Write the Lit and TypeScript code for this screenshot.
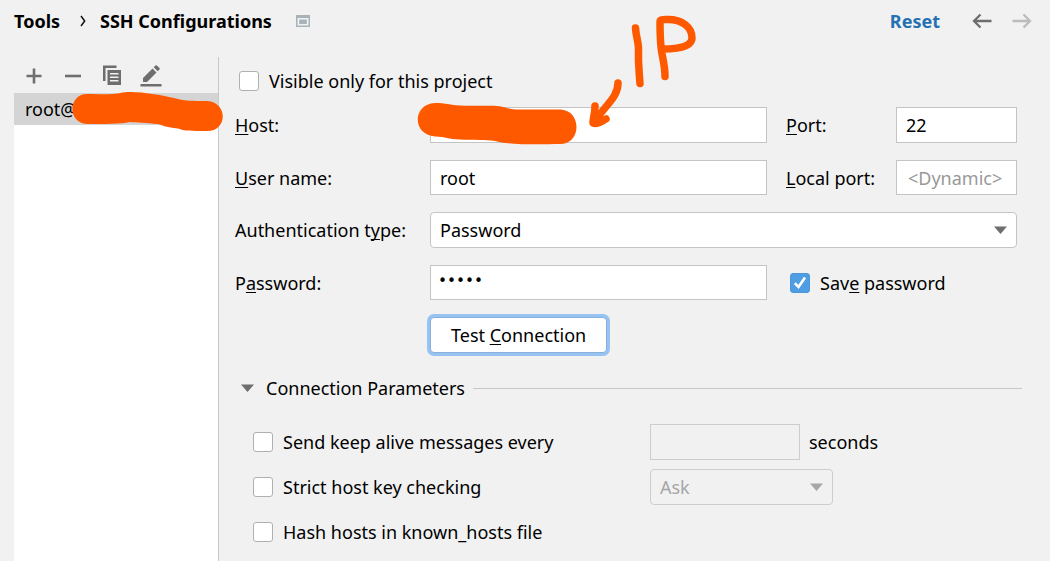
import { LitElement, html, css, svg } from "lit";
import { customElement, property } from "lit/decorators.js";

const base = css`
  * {
    box-sizing: border-box;
  }
  button,
  input,
  select {
    font: inherit;
    color: inherit;
    margin: 0;
  }
  svg {
    display: block;
  }
`;

const ink = "#ff5900";

@customElement("side-list")
class SideList extends LitElement {
  static styles = [
    base,
    css`
      :host {
        display: flex;
        flex-direction: column;
        border-right: 1px solid #c9c9c9;
      }
      .bar {
        display: flex;
        align-items: center;
        height: 36px;
        padding-left: 8px;
        gap: 15px;
      }
      .tool {
        display: grid;
        place-items: center;
        width: 24px;
        height: 24px;
        padding: 0;
        border: 0;
        background: none;
      }
      .list {
        flex: 1;
        margin: 0;
        padding: 0;
        list-style: none;
        background: #fff;
      }
      .item {
        position: relative;
        height: 32px;
        padding-left: 11px;
        line-height: 32px;
        background: #d4d4d4;
      }
      .mark {
        position: absolute;
        left: 56px;
        top: -4px;
        z-index: 2;
      }
    `,
  ];

  render() {
    return html`
      <div class="bar">
        <button class="tool" aria-label="Add">
          <svg width="24" height="24" viewBox="0 0 24 24">
            <path d="M12 5.500V20.500M4.500 13H19.500" stroke="#6e6e6e" stroke-width="2.600" />
          </svg>
        </button>
        <button class="tool" aria-label="Remove">
          <svg width="24" height="24" viewBox="0 0 24 24">
            <path d="M4 13H20" stroke="#6e6e6e" stroke-width="2.600" />
          </svg>
        </button>
        <button class="tool" aria-label="Copy">
          <svg width="24" height="24" viewBox="0 0 24 24">
            <path d="M3 2.500H16.500V5H5.500V18H3Z" fill="#6e6e6e" />
            <path
              fill-rule="evenodd"
              d="M7.500 7H21V22H7.500ZM10 10V11.500H18.500V10ZM10 13.500V15H18.500V13.500ZM10 17V18.500H18.500V17Z"
              fill="#6e6e6e"
            />
          </svg>
        </button>
        <button class="tool" aria-label="Edit">
          <svg width="24" height="24" viewBox="0 0 24 24">
            <path
              d="M1.500 21H22.500V23.500H1.500ZM4 19V15L13.500 5.500L17.500 9.500L8 19ZM14.700 4.300L16.500 2.500Q17.200 1.900 17.900 2.500L20.500 5.100Q21.100 5.800 20.500 6.500L18.700 8.300Z"
              fill="#6e6e6e"
            />
          </svg>
        </button>
      </div>
      <ul class="list">
        <li class="item">
          root@
          <svg class="mark" width="156" height="46" viewBox="70 89 156 46">
            <path
              d="M87 94C98 93.500 108 95 118 93.500C128 91 140 92 152 94C164 95 166 97 174 98C184 101 192 101 207 101C228 102 228 131 207 131C192 131 184 131 178 128.500C166 127 164 126 158 124C146 123 136 122.500 130 122C120 124 106 124 87 124C67 123 68 94 87 94Z"
              fill=${ink}
            />
          </svg>
        </li>
      </ul>
    `;
  }
}

@customElement("check-option")
class CheckOption extends LitElement {
  @property() name = "";
  @property({ type: Boolean }) checked = false;

  static styles = [
    base,
    css`
      :host {
        display: block;
      }
      .option {
        display: flex;
        align-items: center;
        gap: 10px;
        white-space: nowrap;
      }
      .box {
        display: grid;
        width: 20px;
        height: 20px;
      }
      .box > * {
        grid-area: 1 / 1;
      }
      .tick {
        appearance: none;
        width: 20px;
        height: 20px;
        border: 1px solid #b0b0b0;
        border-radius: 3px;
        background: #fff;
      }
      .tick:checked {
        border-color: #4b97d9;
        background: #4f9ee3;
      }
      .glyph {
        pointer-events: none;
        visibility: hidden;
      }
      .tick:checked + .glyph {
        visibility: visible;
      }
    `,
  ];

  render() {
    return html`
      <label class="option">
        <span class="box">
          <input class="tick" type="checkbox" name=${this.name} .checked=${this.checked} />
          <svg class="glyph" width="20" height="20" viewBox="0 0 20 20">
            <path d="M4.800 10.200L8.500 14L15 4.500" fill="none" stroke="#fff" stroke-width="2.600" />
          </svg>
        </span>
        <span><slot></slot></span>
      </label>
    `;
  }
}

@customElement("app-root")
class AppRoot extends LitElement {
  static styles = [
    base,
    css`
      :host {
        display: flex;
        flex-direction: column;
        min-height: 100vh;
        overflow: hidden;
        background: #f1f1f1;
        color: #000;
        font: 18px/24px "Noto Sans", "Open Sans", sans-serif;
      }
      u {
        text-underline-offset: 2px;
        text-decoration-thickness: 1px;
        text-decoration-skip-ink: none;
      }
      .head {
        display: flex;
        align-items: center;
        height: 57px;
        padding: 0 18px 16px 14px;
        font-weight: 700;
      }
      .crumbs {
        display: flex;
        align-items: center;
        flex: 1;
      }
      .chevron {
        margin: 0 14px 0 20px;
      }
      .scope {
        margin-left: 24px;
      }
      .reset {
        color: #2470b3;
        text-decoration: none;
        margin-right: 32px;
      }
      .nav {
        padding: 0;
        border: 0;
        background: none;
      }
      .nav + .nav {
        margin-left: 20px;
      }
      .body {
        flex: 1;
        display: grid;
        grid-template-columns: 205px minmax(0, 1fr);
        padding-left: 14px;
      }
      .main {
        padding: 12px 28px 0 16px;
      }
      .visible {
        padding-left: 4px;
      }
      .form {
        display: grid;
        grid-template-columns: 195px minmax(0, 1fr) 129px 121px;
        grid-auto-rows: 36px 35px;
        row-gap: 17px;
        margin-top: 14px;
        padding-right: 5px;
        align-items: center;
      }
      .field {
        width: 100%;
        height: 100%;
        padding: 0 9px;
        border: 1px solid #c4c4c4;
        border-radius: 0;
        background: #fff;
        outline: 0;
      }
      .field::placeholder {
        color: #999;
        opacity: 1;
      }
      .dynamic {
        padding-right: 4px;
        padding-left: 11px;
      }
      .secret {
        font-family: "DejaVu Sans Mono", monospace;
        font-size: 15px;
        padding-bottom: 4px;
        padding-left: 7px;
      }
      .host {
        position: relative;
        height: 100%;
      }
      .marks {
        position: absolute;
        left: -15px;
        top: -95px;
        pointer-events: none;
      }
      .second {
        padding-left: 19px;
      }
      .combo {
        display: grid;
        height: 100%;
        align-items: center;
      }
      .combo > * {
        grid-area: 1 / 1;
      }
      .wide {
        grid-column: 2 / 5;
      }
      .select {
        appearance: none;
        border-radius: 4px;
      }
      .arrow {
        justify-self: end;
        margin-right: 10px;
        pointer-events: none;
      }
      .save {
        grid-column: 3 / 5;
        padding-left: 23px;
      }
      .test {
        grid-column: 2;
        justify-self: start;
        height: 36px;
        padding: 0 20px;
        border: 1px solid #87afda;
        border-radius: 4px;
        background: #fff;
        box-shadow: 0 0 0 3px #97c3f3;
        outline: 0;
      }
      .section {
        display: flex;
        align-items: center;
        margin-top: 23px;
        padding-left: 6px;
      }
      .toggle {
        display: flex;
        align-items: center;
        gap: 12px;
        padding: 0;
        border: 0;
        background: none;
      }
      .rule {
        flex: 1;
        height: 1px;
        margin-left: 8px;
        background: #c9c9c9;
      }
      .params {
        display: grid;
        grid-template-columns: 397px 183px minmax(0, 1fr);
        grid-auto-rows: 36px;
        row-gap: 9px;
        margin-top: 24px;
        padding-left: 18px;
        align-items: center;
      }
      .params check-option {
        grid-column: 1;
      }
      .every {
        grid-column: 2 / 4;
        display: flex;
        align-items: center;
        gap: 9px;
        height: 100%;
      }
      .seconds {
        width: 150px;
      }
      .field:disabled {
        color: #a6a6a6;
        opacity: 1;
        border-color: #cdcdcd;
        background: #f1f1f1;
      }
    `,
  ];

  arrow(fill: string) {
    return html`<svg class="arrow" width="13" height="8" viewBox="0 0 13 8">
      ${svg`<path d="M0 .5H13L6.500 8Z" fill=${fill} />`}
    </svg>`;
  }

  render() {
    return html`
      <header class="head">
        <div class="crumbs">
          <span>Tools</span>
          <svg class="chevron" width="6" height="12" viewBox="0 0 6 12">
            <path d="M1 1L4.700 6L1 11" fill="none" stroke="#111" stroke-width="1.500" />
          </svg>
          <span>SSH Configurations</span>
          <svg class="scope" width="14" height="12" viewBox="0 0 14 12">
            <path fill-rule="evenodd" d="M0 0H14V12H0ZM1.500 3V10.500H12.500V3Z" fill="#a8b2b9" />
            <path d="M3.200 4.500H10.800V9H3.200Z" fill="#a8b2b9" />
          </svg>
        </div>
        <a class="reset" href="#">Reset</a>
        <button class="nav" aria-label="Back">
          <svg width="20" height="16" viewBox="0 0 20 16">
            <path d="M19.500 8H2M8.500 1.500L2 8L8.500 14.500" fill="none" stroke="#6e6e6e" stroke-width="2.300" />
          </svg>
        </button>
        <button class="nav" aria-label="Forward" disabled>
          <svg width="20" height="16" viewBox="0 0 20 16">
            <path d="M.5 8H18M11.500 1.500L18 8L11.500 14.500" fill="none" stroke="#bcbcbc" stroke-width="2.300" />
          </svg>
        </button>
      </header>
      <div class="body">
        <side-list></side-list>
        <main class="main">
          <check-option class="visible" name="visible">Visible only for this project</check-option>
          <div class="form">
            <label for="host"><u>H</u>ost:</label>
            <div class="host">
              <input class="field" id="host" />
              <svg class="marks" width="290" height="140" viewBox="415 12 290 140">
                <path
                  d="M435 103C446 103 450 105 460 105.500C474 106 490 105.500 497 106C506 107 507 109 516 109.500H560C582 110 582 144 560 144C538 144.500 510 145 495 141C486 139.500 474 140.500 460 139.500C448 139 446 137 435 136.500C412 135 412 104 435 103Z"
                  fill=${ink}
                />
                <g fill="none" stroke=${ink} stroke-width="7.500" stroke-linecap="round" stroke-linejoin="round">
                  <path d="M635.500 28C636 36 638 40 638.500 48C638 64 639 70 640 83.500" />
                  <path
                    d="M665 76.500C665 66 663 60 661.500 51C660 40 660 30 660 22C660 19 663 19.500 668 19.500C682 19.500 692 27 692 38C692 46 680 49 663 49"
                  />
                  <path d="M618 83C618 98 604 106 597 119M595 106C595 114 593 118 593 123C598 125 602 121 606 119" />
                </g>
              </svg>
            </div>
            <label class="second" for="port"><u>P</u>ort:</label>
            <input class="field" id="port" value="22" />

            <label for="user"><u>U</u>ser name:</label>
            <input class="field" id="user" value="root" />
            <label class="second" for="local"><u>L</u>ocal port:</label>
            <input class="field dynamic" id="local" placeholder="&lt;Dynamic&gt;" />

            <label for="auth">Authentication t<u>y</u>pe:</label>
            <div class="combo wide">
              <select class="field select" id="auth">
                <option>Password</option>
              </select>
              ${this.arrow("#6e6e6e")}
            </div>

            <label for="pass">P<u>a</u>ssword:</label>
            <input class="field secret" id="pass" type="password" value="admin" />
            <check-option class="save" name="save" checked>Sav<u>e</u> password</check-option>

            <button class="test">Test <u>C</u>onnection</button>
          </div>
          <div class="section">
            <button class="toggle" aria-expanded="true">
              <svg width="13" height="8" viewBox="0 0 13 8">
                <path d="M0 .5H13L6.500 8Z" fill="#6e6e6e" />
              </svg>
              Connection Parameters
            </button>
            <span class="rule"></span>
          </div>
          <div class="params">
            <check-option name="alive">Send keep alive messages every</check-option>
            <div class="every">
              <input class="field seconds" id="seconds" disabled />
              <label for="seconds">seconds</label>
            </div>
            <check-option name="strict">Strict host key checking</check-option>
            <div class="combo">
              <select class="field select" aria-label="Strict host key checking" disabled>
                <option>Ask</option>
              </select>
              ${this.arrow("#a6a6a6")}
            </div>
            <check-option name="hash">Hash hosts in known_hosts file</check-option>
          </div>
        </main>
      </div>
    `;
  }
}
